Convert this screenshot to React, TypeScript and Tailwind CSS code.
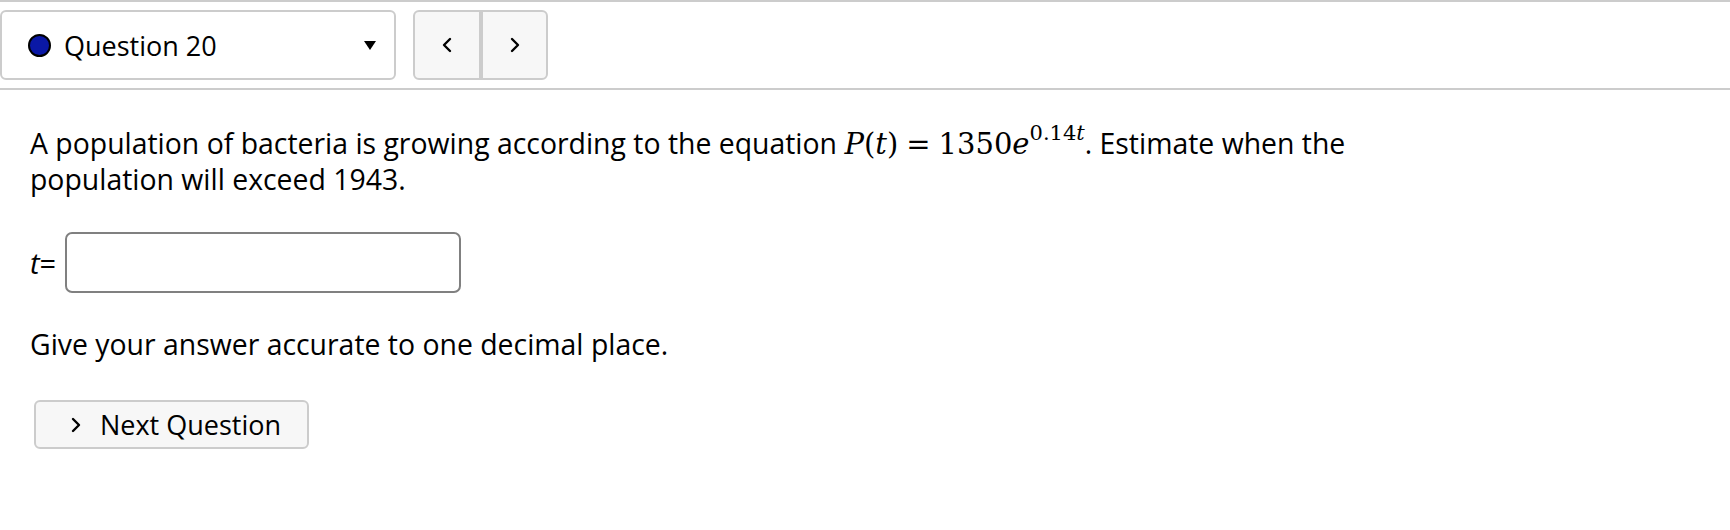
import React from "react";

function Chevron({ dir, className }: { dir: "left" | "right"; className?: string }) {
  return (
    <svg width="12" height="16" viewBox="0 0 12 16" className={className} fill="none">
      {dir === "left" ? (
        <path d="M9 2 L3 8 L9 14" stroke="#000" strokeWidth="2.4" strokeLinecap="round" strokeLinejoin="round" />
      ) : (
        <path d="M3 2 L9 8 L3 14" stroke="#000" strokeWidth="2.4" strokeLinecap="round" strokeLinejoin="round" />
      )}
    </svg>
  );
}

export default function App() {
  return (
    <div className="w-[1730px] h-[530px] bg-white text-black font-['Open_Sans',sans-serif] border-t-2 border-[#cccccc]">
      <div className="flex items-center gap-[17px] pt-[8px] pb-[8px] border-b-2 border-[#cccccc]">
        <div className="w-[396px] h-[70px] flex items-center border-2 border-[#cccccc] rounded-[6px] bg-white pl-[26px] pr-[18px]">
          <span className="w-[23px] h-[23px] rounded-full bg-[#0a18a6] border-2 border-black shrink-0" />
          <span className="ml-[13px] text-[27px] leading-none">Question 20</span>
          <span className="ml-auto">
            <svg width="12" height="9" viewBox="0 0 12 9">
              <path d="M0 0 H12 L6 9 Z" fill="#000" />
            </svg>
          </span>
        </div>
        <div className="flex h-[70px]">
          <button className="w-[68px] h-full flex items-center justify-center bg-[#f7f7f7] border-2 border-[#cccccc] rounded-l-[6px]">
            <Chevron dir="left" />
          </button>
          <button className="w-[67px] h-full flex items-center justify-center bg-[#f7f7f7] border-2 border-[#cccccc] rounded-r-[6px]">
            <Chevron dir="right" />
          </button>
        </div>
      </div>

      <div className="px-[30px]">
        <p className="mt-[33px] text-[28.4px] leading-[36px] w-[1390px]">
          A population of bacteria is growing according to the equation{" "}
          <span className="font-['DejaVu_Serif',serif] text-[29px] leading-none">
            <i>P</i>(<i>t</i>)<span className="mx-[8px]">=</span>1350<i>e</i>
            <span className="text-[21px] align-[14px]">
              0.14<i>t</i>
            </span>
          </span>
          . Estimate when the population will exceed 1943.
        </p>

        <div className="mt-[35px] flex items-center">
          <span className="text-[29px] w-[35px] leading-none">
            <i>t</i>=
          </span>
          <div className="w-[396px] h-[61px] border-2 border-[#808080] rounded-[7px] bg-white" />
        </div>

        <p className="mt-[35px] text-[28.4px] leading-[33px]">Give your answer accurate to one decimal place.</p>

        <button className="mt-[39px] ml-[4px] h-[49px] flex items-center bg-[#f7f7f7] border-2 border-[#cccccc] rounded-[6px] pl-[34px] pr-[26px]">
          <Chevron dir="right" />
          <span className="ml-[18px] text-[27px] leading-none">Next Question</span>
        </button>
      </div>
    </div>
  );
}
